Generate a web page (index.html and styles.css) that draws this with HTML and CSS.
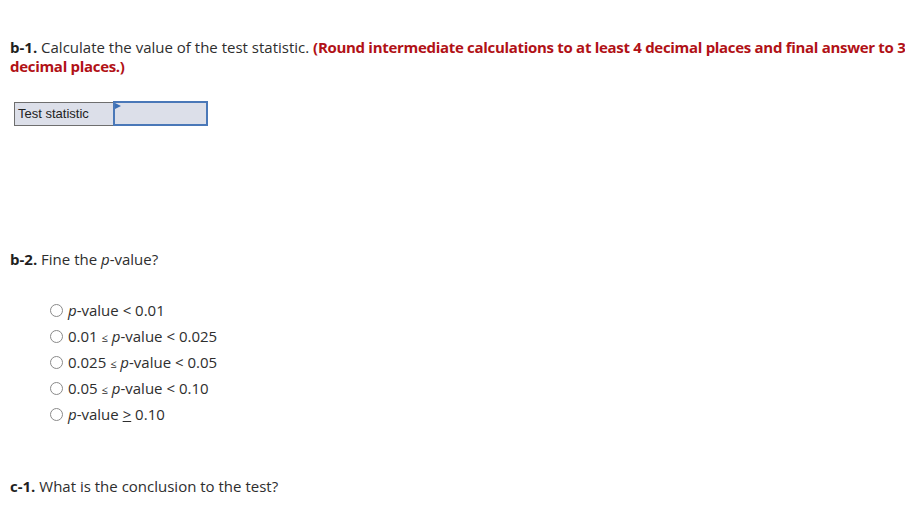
FILE: index.html
```html
<!DOCTYPE html>
<html>
<head>
<meta charset="utf-8">
<link rel="stylesheet" href="styles.css">
</head>
<body>
<div class="page">
  <p class="q q1"><b>b-1.</b> Calculate the value of the test statistic. <span class="hint">(Round intermediate calculations to at least 4 decimal places and final answer to 3<br>decimal places.)</span></p>
  <table class="ans">
    <tr>
      <td class="lbl">Test statistic</td>
      <td class="inp"><span class="flag"></span></td>
    </tr>
  </table>
  <p class="q q2"><b>b-2.</b> Fine the <i>p</i>-value?</p>
  <ul class="opts">
    <li><span class="radio"></span><span><i>p</i>-value &lt; 0.01</span></li>
    <li><span class="radio"></span><span>0.01 <span class="le">≤</span> <i>p</i>-value &lt; 0.025</span></li>
    <li><span class="radio"></span><span>0.025 <span class="le">≤</span> <i>p</i>-value &lt; 0.05</span></li>
    <li><span class="radio"></span><span>0.05 <span class="le">≤</span> <i>p</i>-value &lt; 0.10</span></li>
    <li><span class="radio"></span><span><i>p</i>-value <u>&gt;</u> 0.10</span></li>
  </ul>
  <p class="q q3"><b>c-1.</b> What is the conclusion to the test?</p>
</div>
</body>
</html>
```
FILE: styles.css
```css
html, body { margin: 0; padding: 0; background: #fff; overflow: hidden; }
.page {
  padding: 38px 0 0 10px;
  font-family: "Open Sans", "Liberation Sans", sans-serif;
  font-size: 15px;
  color: #2e2e2e;
}
.q { margin: 0; line-height: 19px; }
.q1 { white-space: nowrap; }
.q b { color: #1f1f1f; font-weight: 700; }
.hint { color: #b11116; font-weight: 700; letter-spacing: -0.3px; }
.ans {
  border-collapse: collapse;
  margin: 25px 0 0 4px;
  font-family: "Liberation Sans", Arial, sans-serif;
  font-size: 13px;
  color: #222;
}
.ans td { height: 21px; padding: 0; background: #dcdfe9; }
.lbl { width: 95px; border: 1px solid #6e6e6e; padding-left: 3px !important; }
.inp { width: 91px; border: 2px solid #4a78b8; position: relative; }
.flag {
  position: absolute; left: 0; top: 0;
  width: 0; height: 0;
  border-top: 3px solid transparent;
  border-bottom: 3px solid transparent;
  border-left: 6px solid #3b6fb5;
}
.q2 { margin-top: 124px; }
.opts { list-style: none; margin: 28px 0 0 40px; padding: 0; }
.opts li { display: flex; align-items: center; height: 26px; }
.radio {
  width: 11px; height: 11px; border: 1px solid #8a8a8a; border-radius: 50%;
  margin-right: 5px; box-sizing: content-box;
}
.le { font-size: 11px; }
.q3 { margin-top: 50px; }
```
